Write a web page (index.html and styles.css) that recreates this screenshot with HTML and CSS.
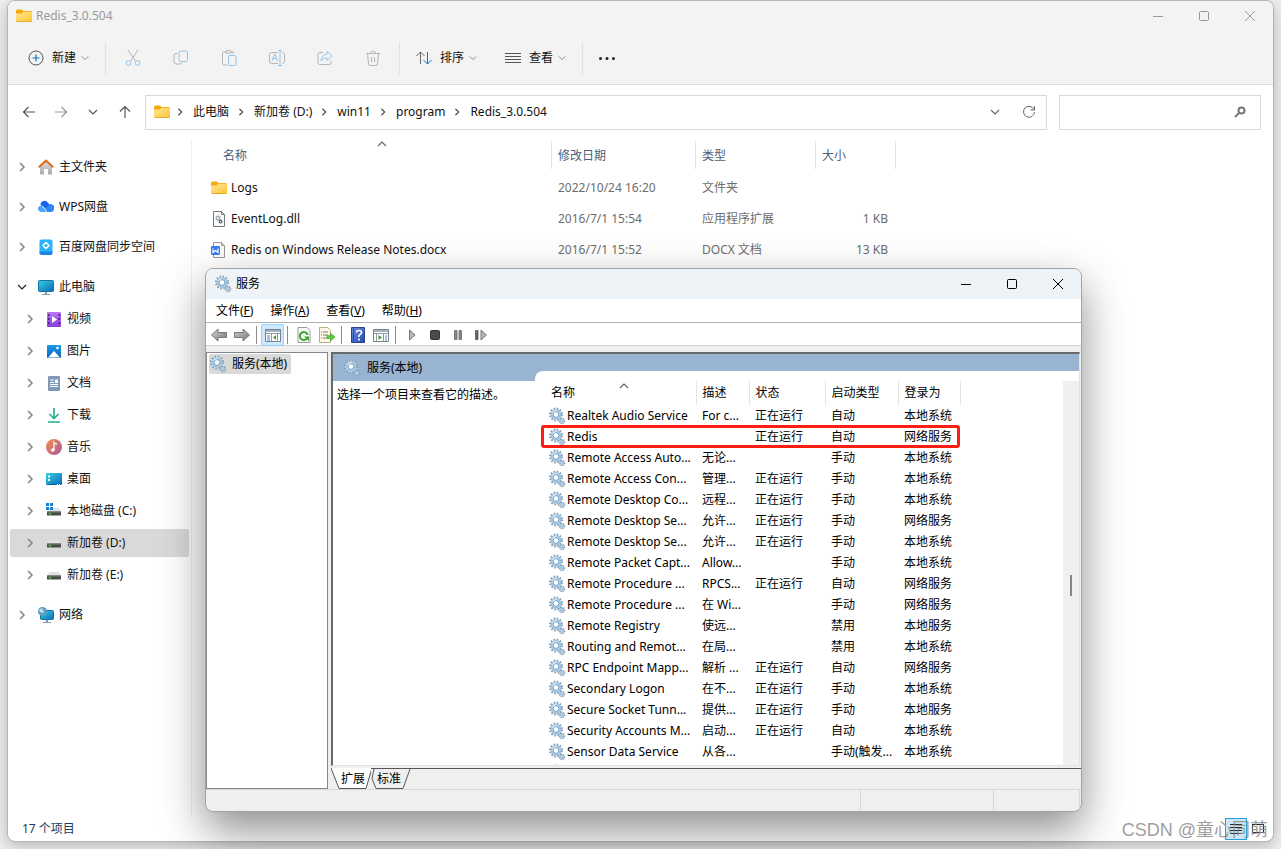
FILE: index.html
```html
<!DOCTYPE html>
<html lang="zh-CN">
  <head>
    <meta charset="utf-8">
    <title>Redis_3.0.504</title>
    <link rel="stylesheet" href="styles.css">
  </head>
  <body>
    <svg class="symbols" width="0" height="0" aria-hidden="true">
      <defs>
        <linearGradient id="yellow" x1="0" y1="0" x2="1" y2="1"><stop offset="0" stop-color="#ffe694"/><stop offset="1" stop-color="#fcc536"/></linearGradient>
        <linearGradient id="screen" x1="0" y1="0" x2="1" y2="1"><stop offset="0" stop-color="#35d3e0"/><stop offset="1" stop-color="#0c67bb"/></linearGradient>
        <linearGradient id="blue" x1="0" y1="0" x2="0" y2="1"><stop offset="0" stop-color="#1b9be8"/><stop offset="1" stop-color="#0c62bd"/></linearGradient>
        <linearGradient id="wall" x1="0" y1="0" x2="0" y2="1"><stop offset="0" stop-color="#e2e2e2"/><stop offset="1" stop-color="#a8a8a8"/></linearGradient>
        <linearGradient id="purple" x1="0" y1="0" x2="0" y2="1"><stop offset="0" stop-color="#b679f2"/><stop offset="1" stop-color="#8a3ddb"/></linearGradient>
        <linearGradient id="music" x1="0" y1="0" x2="1" y2="1"><stop offset="0" stop-color="#f59149"/><stop offset="1" stop-color="#a8559f"/></linearGradient>
        <linearGradient id="arrow" x1="0" y1="0" x2="1" y2="1"><stop offset="0" stop-color="#d2d2d2"/><stop offset="1" stop-color="#777"/></linearGradient>
        <linearGradient id="help" x1="0" y1="0" x2="1" y2="1"><stop offset="0" stop-color="#6d92e0"/><stop offset="1" stop-color="#2347b0"/></linearGradient>
      </defs>
      <symbol id="folder" viewBox="0 0 16 16">
        <path d="M0 3a1.500 1.500 0 0 1 1.500-1.500h4.500l1.500 1.500h7a1.500 1.500 0 0 1 1.500 1.500v8H0z" fill="#f5a90b"/>
        <path d="M0 5.500h5.500l1.800-1.800h7.700a1 1 0 0 1 1 1v8.300a1 1 0 0 1-1 1H1a1 1 0 0 1-1-1z" fill="url(#yellow)"/>
        <path d="M.2 13.200q.3.800 1 .8h13.600q.7 0 1-.8z" fill="#e0a11c"/>
      </symbol>
      <symbol id="down" viewBox="0 0 10 10"><path d="M1 3l4 4 4-4" fill="none" stroke="currentColor" stroke-width="1.200"/></symbol>
      <symbol id="right" viewBox="0 0 10 10"><path d="M3 1l4 4-4 4" fill="none" stroke="currentColor" stroke-width="1.600"/></symbol>
      <symbol id="gear" viewBox="0 0 18 18">
        <circle cx="8" cy="7.500" r="6" fill="#d3e4f0" stroke="#7f9fba" stroke-width="2" stroke-dasharray="1.500 1.640"/>
        <circle cx="8" cy="7.500" r="5" fill="#b9d5ea"/>
        <circle cx="8" cy="7.500" r="4.500" fill="none" stroke="#8fb2d0" stroke-width=".8"/>
        <circle cx="8" cy="7.500" r="2.900" fill="#fff" stroke="#6e9cc4" stroke-width="1"/>
        <path d="M4.500 6a4 4 0 0 1 4-2.500" fill="none" stroke="#eef6fc"/>
        <circle cx="14" cy="14" r="2.400" fill="#c9deed" stroke="#7d9db8" stroke-width="1.800" stroke-dasharray="1 .88"/>
        <circle cx="14" cy="14" r="1" fill="#fff" stroke="#8fb3cd" stroke-width=".8"/>
      </symbol>
      <symbol id="disk" viewBox="0 0 16 16">
        <path d="M3.500 5h9l2.500 4H1z" fill="#dfe0e2"/>
        <path d="M1 8.500h14v4H1z" fill="#4a4a4a"/><path d="M1 8.500h14v1H1z" fill="#7b7b7b"/>
        <path d="M3 10h2v1.500H3z" fill="#35e23a"/>
      </symbol>
      <symbol id="monitor" viewBox="0 0 16 16">
        <rect x=".5" y="1.500" width="15" height="11" rx="1" fill="url(#screen)" stroke="#17729c"/>
        <path d="M7 13h2v2H7zM4 15h8v1H4z" fill="#8b98a2"/>
      </symbol>
    </svg>

    <main class="explorer">
      <header class="titlebar">
        <svg class="icon"><use href="#folder"/></svg>
        <h1>Redis_3.0.504</h1>
        <div class="window-buttons">
          <button aria-label="最小化"><svg viewBox="0 0 12 12"><path d="M1 6.500h10"/></svg></button>
          <button aria-label="最大化"><svg viewBox="0 0 12 12"><rect x="1.500" y="1.500" width="9" height="9" rx="1"/></svg></button>
          <button aria-label="关闭"><svg viewBox="0 0 12 12"><path d="M1 1l10 10M11 1L1 11"/></svg></button>
        </div>
      </header>

      <div class="commands">
        <button class="command">
          <svg class="icon" viewBox="0 0 16 16" fill="none"><circle cx="8" cy="8" r="7" stroke="#555"/><path d="M8 4.500v7M4.500 8h7" stroke="#0a78cc" stroke-width="1.200"/></svg>
          新建<svg class="small"><use href="#down"/></svg>
        </button>
        <span class="divider"></span>
        <button class="tool" aria-label="剪切"><svg viewBox="0 0 16 16"><path d="M3 0l7.500 11M13 0L5.500 11" stroke="#b5b5b5"/><circle cx="3.500" cy="13" r="2.300"/><circle cx="12.500" cy="13" r="2.300"/></svg></button>
        <button class="tool" aria-label="复制"><svg viewBox="0 0 16 16"><path d="M4.500 3.500H3a2 2 0 0 0-2 2V12a2 2 0 0 0 2 2h4a2 2 0 0 0 2-1.500" stroke="#b5b5b5"/><rect x="6" y="1" width="8.500" height="10.500" rx="2"/></svg></button>
        <button class="tool" aria-label="粘贴"><svg viewBox="0 0 16 16"><path d="M6 15H3a1.500 1.500 0 0 1-1.500-1.500v-10A1.500 1.500 0 0 1 3 2h2m5 0h2.500v2M5 .8h5v2.400H5z" stroke="#b5b5b5"/><rect x="7.500" y="5.500" width="7.500" height="10" rx="1.500"/></svg></button>
        <button class="tool" aria-label="重命名"><svg viewBox="0 0 16 16"><path d="M9 2.500H2.500a2 2 0 0 0-2 2v7a2 2 0 0 0 2 2H9m4-11h.5a2 2 0 0 1 2 2v7a2 2 0 0 1-2 2H13" stroke="#b5b5b5"/><path d="M3 11l2.500-7h.5l2.500 7M4 8.500h3.500M11 .5v15M9 .5h4m-4 15h4"/></svg></button>
        <button class="tool" aria-label="共享"><svg viewBox="0 0 16 16"><path d="M6 2.500H3a2 2 0 0 0-2 2v8a2 2 0 0 0 2 2h9a2 2 0 0 0 2-2V11" stroke="#b5b5b5"/><path d="M10 1.500L15 6l-5 4.500V8Q6 8 4 11q.5-6 6-7z"/></svg></button>
        <button class="tool" aria-label="删除"><svg viewBox="0 0 16 16"><path d="M1 3.500h14M2.500 3.500l1 10.500a1.500 1.500 0 0 0 1.500 1.500h6a1.500 1.500 0 0 0 1.500-1.500l1-10.500M5.500 3.500a2.500 2.500 0 0 1 5 0M6.500 7v5M9.500 7v5" stroke="#b5b5b5"/></svg></button>
        <span class="divider"></span>
        <button class="command">
          <svg class="icon" viewBox="0 0 16 16" fill="none"><path d="M4.500 14V2M.5 6l4-4 4 4" stroke="#666"/><path d="M11.500 2v12M7.500 10l4 4 4-4" stroke="#0a78cc"/></svg>
          排序<svg class="small"><use href="#down"/></svg>
        </button>
        <button class="command">
          <svg class="icon" viewBox="0 0 16 16" stroke="#555"><path d="M0 3.500h16M0 6.500h16M0 9.500h16M0 12.500h16"/></svg>
          查看<svg class="small"><use href="#down"/></svg>
        </button>
        <span class="divider"></span>
        <button class="more" aria-label="更多"><svg class="icon" viewBox="0 0 16 16" fill="#222"><circle cx="1.500" cy="8.500" r="1.500"/><circle cx="8" cy="8.500" r="1.500"/><circle cx="14.500" cy="8.500" r="1.500"/></svg></button>
      </div>

      <div class="location">
        <div class="history">
          <button aria-label="返回"><svg viewBox="0 0 14 14"><path d="M13 7H1.500M6.500 2l-5 5 5 5"/></svg></button>
          <button class="faded" aria-label="前进"><svg viewBox="0 0 14 14"><path d="M1 7h11.500M7.500 2l5 5-5 5"/></svg></button>
          <button aria-label="最近"><svg viewBox="0 0 14 14"><path d="M3 5l4 4 4-4"/></svg></button>
          <button aria-label="向上"><svg viewBox="0 0 14 14"><path d="M7 13V1.500M2 6.500l5-5 5 5"/></svg></button>
        </div>
        <div class="address">
          <svg class="icon"><use href="#folder"/></svg>
          <svg class="crumb"><use href="#right"/></svg><a href="#">此电脑</a>
          <svg class="crumb"><use href="#right"/></svg><a href="#">新加卷 (D:)</a>
          <svg class="crumb"><use href="#right"/></svg><a href="#">win11</a>
          <svg class="crumb"><use href="#right"/></svg><a href="#">program</a>
          <svg class="crumb"><use href="#right"/></svg><a href="#">Redis_3.0.504</a>
          <button class="expand" aria-label="展开"><svg class="small"><use href="#down"/></svg></button>
          <button aria-label="刷新"><svg class="icon" viewBox="0 0 16 16" fill="none" stroke="#666"><path d="M13 5.500A5.500 5.500 0 1 0 13.500 8M13.500 2v4h-4"/></svg></button>
        </div>
        <label class="search">
          <input type="text" aria-label="搜索">
          <svg viewBox="0 0 12 12"><circle cx="7.500" cy="4.500" r="3"/><path d="M5.500 6.500L1 11"/></svg>
        </label>
      </div>

      <div class="browse">
        <nav class="tree">
          <a href="#"><svg class="small"><use href="#right"/></svg><svg class="icon" viewBox="0 0 16 16"><path d="M2 7l6-5 6 5v7.500a1 1 0 0 1-1 1h-3V10H6v5.500H3a1 1 0 0 1-1-1z" fill="url(#wall)"/><path d="M.8 8.300L8 1.700l7.200 6.600" fill="none" stroke="#e06c1c" stroke-width="2"/></svg>主文件夹</a>
          <a class="group" href="#"><svg class="small"><use href="#right"/></svg><svg class="icon" viewBox="0 0 16 16"><path d="M2.500 5.500a4 4 0 0 1 7.500-1.500q2 1 2 3l-3 5z" fill="#1a62e8"/><path d="M8 13L6 10l3.500-2.500a3.200 3.200 0 0 1 6.500 2 3.500 3.500 0 0 1-3.500 3.500z" fill="#2f86f8"/><path d="M0 9a3.500 3.500 0 0 1 6-1.500L9.500 13H3.500A3.500 3.500 0 0 1 0 9z" fill="#4ba6ff"/><path d="M4 7.500q3 1 4.500 5.500" stroke="#fff" fill="none" stroke-width=".8"/></svg>WPS网盘</a>
          <a class="group" href="#"><svg class="small"><use href="#right"/></svg><svg class="icon" viewBox="0 0 16 16"><rect x="1.500" y=".5" width="13" height="15" rx="2" fill="#2cb1fc"/><path d="M1.500 12.500h13V14a2 2 0 0 1-2 2h-9a2 2 0 0 1-2-2z" fill="#1689e8"/><path d="M8 3.500L5 6.500l3 3 3-3z" fill="none" stroke="#fff" stroke-width="1.600" stroke-linejoin="round"/></svg>百度网盘同步空间</a>
          <a class="group open" href="#"><svg class="small"><use href="#down"/></svg><svg class="icon"><use href="#monitor"/></svg>此电脑</a>
          <a class="child" href="#"><svg class="small"><use href="#right"/></svg><svg class="icon" viewBox="0 0 16 16"><rect x="1" y="1" width="14" height="15" rx="1" fill="url(#purple)"/><path d="M2 3h1.500v2H2zm0 4h1.500v2H2zm0 4h1.500v2H2zM12.500 3H14v2h-1.500zm0 4H14v2h-1.500zm0 4H14v2h-1.500z" fill="#4b1d7c"/><path d="M6 5l5 3.500L6 12z" fill="#fff"/></svg>视频</a>
          <a class="child" href="#"><svg class="small"><use href="#right"/></svg><svg class="icon" viewBox="0 0 16 16"><rect x="1" y="2" width="14" height="13" rx="1" fill="url(#blue)"/><path d="M2 14.500L8 8l6 6.500z" fill="#fff"/><circle cx="11.500" cy="5" r="1.300" fill="#fff"/></svg>图片</a>
          <a class="child" href="#"><svg class="small"><use href="#right"/></svg><svg class="icon" viewBox="0 0 16 16"><rect x="2" y="1" width="12" height="15" rx="1" fill="#7f99b6"/><path d="M4 5h4M4 7.500h4M4 9.500h8M4 11.500h8" stroke="#fff"/><path d="M9 4.500h3V8H9z" fill="#fff"/></svg>文档</a>
          <a class="child" href="#"><svg class="small"><use href="#right"/></svg><svg class="icon" viewBox="0 0 16 16"><path d="M8 1v10.500M3.500 7L8 11.500 12.500 7M2 15h12" fill="none" stroke="#1fae8e" stroke-width="1.600"/></svg>下载</a>
          <a class="child" href="#"><svg class="small"><use href="#right"/></svg><svg class="icon" viewBox="0 0 16 16"><circle cx="8" cy="8" r="8" fill="url(#music)"/><circle cx="6.800" cy="11" r="1.800" fill="#fff"/><path d="M8 11V3.500q1 1.500 3 1.500" fill="none" stroke="#fff" stroke-width="1.300"/></svg>音乐</a>
          <a class="child" href="#"><svg class="small"><use href="#right"/></svg><svg class="icon" viewBox="0 0 16 16"><rect y="2" width="16" height="12" rx="1" fill="url(#screen)"/><path d="M2 4.500h2v2H2zm0 3.500h2v2H2z" fill="#fff"/><path d="M1 13.500h9" stroke="#0a5c9c"/><path d="M11 13.500h1m1 0h1" stroke="#fff"/></svg>桌面</a>
          <a class="child" href="#"><svg class="small"><use href="#right"/></svg><svg class="icon" viewBox="0 0 16 16"><use href="#disk"/><path d="M0 0h3v3H0zm4 0h3v3H4zM0 4h3v3H0zm4 0h3v3H4z" fill="#0f7fd8"/></svg>本地磁盘 (C:)</a>
          <a class="child selected" href="#"><svg class="small"><use href="#right"/></svg><svg class="icon"><use href="#disk"/></svg>新加卷 (D:)</a>
          <a class="child" href="#"><svg class="small"><use href="#right"/></svg><svg class="icon"><use href="#disk"/></svg>新加卷 (E:)</a>
          <a class="group" href="#"><svg class="small"><use href="#right"/></svg><svg class="icon" viewBox="0 0 16 16"><rect x="2.500" y="3.500" width="13" height="9" rx="1" fill="url(#screen)" stroke="#17729c"/><path d="M8 13h2v2H8zM5 15h8v1H5z" fill="#8b98a2"/><circle cx="4.500" cy="4.500" r="4.500" fill="#5d9dc2"/><path d="M1 3q2-2 4-2l-1 2 2 1-1 2-3-1z" fill="#c3e2ee"/></svg>网络</a>
        </nav>

        <section class="files">
          <table>
            <colgroup><col class="f-name"><col class="f-date"><col class="f-type"><col class="f-size"></colgroup>
            <thead>
              <tr><th>名称<svg class="sort"><use href="#down"/></svg></th><th>修改日期</th><th>类型</th><th>大小</th></tr>
            </thead>
            <tbody>
              <tr><td><div class="file"><svg class="icon"><use href="#folder"/></svg>Logs</div></td><td>2022/10/24 16:20</td><td>文件夹</td><td></td></tr>
              <tr><td><div class="file"><svg class="icon" viewBox="0 0 16 16"><path d="M2.500.5h8l3 3v12h-11z" fill="#fafafa" stroke="#777"/><path d="M10.500.5v3h3" fill="none" stroke="#777"/><circle cx="7" cy="7" r="1.800" fill="none" stroke="#a3adb8" stroke-width="1.500"/><circle cx="9.500" cy="10.500" r="1.300" fill="none" stroke="#59636e" stroke-width="1.300"/></svg>EventLog.dll</div></td><td>2016/7/1 15:54</td><td>应用程序扩展</td><td>1 KB</td></tr>
              <tr><td><div class="file"><svg class="icon" viewBox="0 0 16 16"><path d="M2.500.5h8l3 3v12h-11z" fill="#fafafa" stroke="#999"/><path d="M10.500.5v3h3" fill="none" stroke="#999"/><rect y="4" width="9" height="9" rx="1" fill="#3d7df0"/><path d="M2 6.500v4l2.500-2 2.500 2v-4" fill="none" stroke="#fff" stroke-width="1.200"/></svg>Redis on Windows Release Notes.docx</div></td><td>2016/7/1 15:52</td><td>DOCX 文档</td><td>13 KB</td></tr>
            </tbody>
          </table>
        </section>
      </div>

      <footer class="summary">
        <span>17 个项目</span>
        <button class="view active" aria-label="详细信息"><svg viewBox="0 0 14 14"><path d="M1 2.500h12M1 5.500h12M1 8.500h12M1 11.500h12"/></svg></button>
        <button class="view" aria-label="大图标"><svg viewBox="0 0 14 14"><rect x="1.500" y="2.500" width="11" height="8"/></svg></button>
      </footer>
    </main>

    <section class="services">
      <header class="titlebar">
        <svg class="gear"><use href="#gear"/></svg>
        <h2>服务</h2>
        <div class="window-buttons">
          <button aria-label="最小化"><svg viewBox="0 0 12 12"><path d="M1 6.500h10"/></svg></button>
          <button aria-label="最大化"><svg viewBox="0 0 12 12"><rect x="1.500" y="1.500" width="9" height="9" rx="1"/></svg></button>
          <button aria-label="关闭"><svg viewBox="0 0 12 12"><path d="M1 1l10 10M11 1L1 11"/></svg></button>
        </div>
      </header>

      <div class="menu">
        <button>文件(<u>F</u>)</button>
        <button>操作(<u>A</u>)</button>
        <button>查看(<u>V</u>)</button>
        <button>帮助(<u>H</u>)</button>
      </div>

      <div class="toolbar">
        <button aria-label="后退"><svg viewBox="0 0 16 16"><path d="M.5 8L7 2v3.500h8.500v5H7V14z" fill="url(#arrow)" stroke="#777"/></svg></button>
        <button aria-label="前进"><svg viewBox="0 0 16 16"><path d="M15.500 8L9 2v3.500H.5v5H9V14z" fill="url(#arrow)" stroke="#777"/></svg></button>
        <i></i>
        <button class="pressed" aria-label="控制台树"><svg viewBox="0 0 16 16"><path d="M.5 2.500h15v12H.5z" fill="#fff" stroke="#76828f"/><path d="M1 3h14v2H1z" fill="#a5b2c0"/><path d="M1 6.500h14M6.500 7v7.500M12.500 7v7.500" stroke="#8d99a6"/><path d="M2 9h3M2 11h3M2 13h3" stroke="#4a86c5"/><path d="M11 8v5l-3-2.500z" fill="#35a526"/></svg></button>
        <i></i>
        <button aria-label="刷新"><svg viewBox="0 0 16 16"><path d="M2 .5h9l3 3v12H2z" fill="#fafafa" stroke="#999"/><path d="M11 11.500a4 4 0 1 1 .7-3.500" fill="none" stroke="#39a431" stroke-width="2"/><path d="M8 9.500h5V14z" fill="#39a431"/></svg></button>
        <button aria-label="导出列表"><svg viewBox="0 0 16 16"><path d="M.5.500h8l3 3v12H.500z" fill="#fffbe4" stroke="#b8ad87"/><path d="M2 5h1m1 0h5M2 8h1m1 0h5M2 11h1m1 0h5" stroke="#777"/><path d="M8 8.500h3.500V6L16 10l-4.500 4v-2.500H8z" fill="#5bc839" stroke="#3b9e21" stroke-width=".5"/></svg></button>
        <i></i>
        <button aria-label="帮助"><svg viewBox="0 0 16 16"><path d="M1.500.5h13v15h-13z" fill="url(#help)" stroke="#29438e"/><path d="M3.500 1v14" stroke="#2a49a4"/><path d="M6.500 5.500q0-2 2.500-2t2.500 2q0 1.300-1.500 2T9 10M9 11.500v2" fill="none" stroke="#fff" stroke-width="1.700"/></svg></button>
        <button aria-label="操作窗格"><svg viewBox="0 0 16 16"><path d="M.5 2.500h15v12H.5z" fill="#fff" stroke="#76828f"/><path d="M1 3h14v2H1z" fill="#a5b2c0"/><path d="M1 6.500h14M3.500 7v7.500M10.500 7v7.500" stroke="#8d99a6"/><path d="M12 9h2M12 11h2M12 13h2" stroke="#4a86c5"/><path d="M5.500 8v5l3.500-2.500z" fill="#35a526"/></svg></button>
        <i></i>
        <button aria-label="启动"><svg viewBox="0 0 16 16"><path d="M5.500 3v10L11 8z" fill="#b5b5b5" stroke="#777"/></svg></button>
        <button aria-label="停止"><svg viewBox="0 0 16 16"><rect x="3.500" y="3.500" width="9" height="9" rx="1" fill="#4b4b4b" stroke="#333"/></svg></button>
        <button aria-label="暂停"><svg viewBox="0 0 16 16"><path d="M4.500 3.500H7v9H4.500zM9 3.500h2.500v9H9z" fill="#888" stroke="#666" stroke-width=".8"/></svg></button>
        <button aria-label="重新启动"><svg viewBox="0 0 16 16"><path d="M2.500 3.500H5v9H2.500z" fill="#666" stroke="#555" stroke-width=".8"/><path d="M8 3v10l5.500-5z" fill="#b5b5b5" stroke="#777"/></svg></button>
      </div>

      <div class="console">
        <div class="console-tree">
          <a href="#"><svg class="gear"><use href="#gear"/></svg>服务(本地)</a>
        </div>
        <div class="detail">
          <div class="pane">
            <div class="extended">
              <h3><svg class="gear"><use href="#gear"/></svg>服务(本地)</h3>
              <p>选择一个项目来查看它的描述。</p>
            </div>
            <div class="list">
              <table>
                <colgroup><col class="s-name"><col class="s-desc"><col class="s-state"><col class="s-start"><col class="s-user"></colgroup>
                <thead>
                  <tr><th>名称<svg class="sort"><use href="#down"/></svg></th><th>描述</th><th>状态</th><th>启动类型</th><th>登录为</th></tr>
                </thead>
                <tbody>
                  <tr><td><svg class="gear"><use href="#gear"/></svg>Realtek Audio Service</td><td>For c...</td><td>正在运行</td><td>自动</td><td>本地系统</td></tr>
                  <tr class="marked"><td><svg class="gear"><use href="#gear"/></svg>Redis</td><td></td><td>正在运行</td><td>自动</td><td>网络服务</td></tr>
                  <tr><td><svg class="gear"><use href="#gear"/></svg>Remote Access Auto...</td><td>无论...</td><td></td><td>手动</td><td>本地系统</td></tr>
                  <tr><td><svg class="gear"><use href="#gear"/></svg>Remote Access Con...</td><td>管理...</td><td>正在运行</td><td>手动</td><td>本地系统</td></tr>
                  <tr><td><svg class="gear"><use href="#gear"/></svg>Remote Desktop Co...</td><td>远程...</td><td>正在运行</td><td>手动</td><td>本地系统</td></tr>
                  <tr><td><svg class="gear"><use href="#gear"/></svg>Remote Desktop Se...</td><td>允许...</td><td>正在运行</td><td>手动</td><td>网络服务</td></tr>
                  <tr><td><svg class="gear"><use href="#gear"/></svg>Remote Desktop Se...</td><td>允许...</td><td>正在运行</td><td>手动</td><td>本地系统</td></tr>
                  <tr><td><svg class="gear"><use href="#gear"/></svg>Remote Packet Capt...</td><td>Allow...</td><td></td><td>手动</td><td>本地系统</td></tr>
                  <tr><td><svg class="gear"><use href="#gear"/></svg>Remote Procedure ...</td><td>RPCS...</td><td>正在运行</td><td>自动</td><td>网络服务</td></tr>
                  <tr><td><svg class="gear"><use href="#gear"/></svg>Remote Procedure ...</td><td>在 Wi...</td><td></td><td>手动</td><td>网络服务</td></tr>
                  <tr><td><svg class="gear"><use href="#gear"/></svg>Remote Registry</td><td>使远...</td><td></td><td>禁用</td><td>本地服务</td></tr>
                  <tr><td><svg class="gear"><use href="#gear"/></svg>Routing and Remot...</td><td>在局...</td><td></td><td>禁用</td><td>本地系统</td></tr>
                  <tr><td><svg class="gear"><use href="#gear"/></svg>RPC Endpoint Mapp...</td><td>解析 ...</td><td>正在运行</td><td>自动</td><td>网络服务</td></tr>
                  <tr><td><svg class="gear"><use href="#gear"/></svg>Secondary Logon</td><td>在不...</td><td>正在运行</td><td>手动</td><td>本地系统</td></tr>
                  <tr><td><svg class="gear"><use href="#gear"/></svg>Secure Socket Tunn...</td><td>提供...</td><td>正在运行</td><td>手动</td><td>本地服务</td></tr>
                  <tr><td><svg class="gear"><use href="#gear"/></svg>Security Accounts M...</td><td>启动...</td><td>正在运行</td><td>自动</td><td>本地系统</td></tr>
                  <tr><td><svg class="gear"><use href="#gear"/></svg>Sensor Data Service</td><td>从各...</td><td></td><td>手动(触发...</td><td>本地系统</td></tr>
                  <tr><td><svg class="gear"><use href="#gear"/></svg></td><td></td><td></td><td></td><td></td></tr>
                </tbody>
              </table>
              <div class="scrollbar"><span></span></div>
            </div>
          </div>
          <div class="tabs">
            <button class="tab current"><svg viewBox="0 0 40 21" preserveAspectRatio="none"><path d="M0 0l8 20.500h27L41 0" fill="#fff" stroke="#555"/></svg><span>扩展</span></button>
            <button class="tab"><svg viewBox="0 0 40 21" preserveAspectRatio="none"><path d="M3 0L1 10l4 10.500h27L39 0" fill="#efefef" stroke="#555"/></svg><span>标准</span></button>
          </div>
        </div>
      </div>
      <footer class="status"><span></span><span></span><span></span></footer>
    </section>

    <p class="credit">CSDN @童心同萌</p>
  </body>
</html>
```
FILE: styles.css
```css
*,
*:after,
*:before {
  box-sizing: border-box;
  margin: 0;
  padding: 0;
}

body {
  height: 100vh;
  display: flex;
  padding: 0 7px 7px;
  position: relative;
  overflow: hidden;
  background: #f0f0f0;
  color: #111;
  font-family: "Noto Sans", "Noto Sans CJK SC", sans-serif;
  font-size: 12px;
  line-height: 16px;
}

button {
  border: 0;
  background: none;
  color: inherit;
  font: inherit;
  display: flex;
  align-items: center;
  justify-content: center;
}

a {
  color: inherit;
  text-decoration: none;
}

svg {
  flex: none;
}

table {
  table-layout: fixed;
  border-collapse: collapse;
}

th {
  font-weight: normal;
  text-align: left;
}

h1,
h2,
h3 {
  font-size: 12px;
  font-weight: normal;
}

.symbols {
  position: absolute;
}

.icon {
  width: 16px;
  height: 16px;
}

.small {
  width: 10px;
  height: 10px;
}

.gear {
  width: 18px;
  height: 18px;
}

/* explorer window */

.explorer {
  flex: 1;
  min-width: 0;
  display: flex;
  flex-direction: column;
  border: 1px solid #b5b5b5;
  border-radius: 8px;
  overflow: hidden;
  background: #fff;
  box-shadow: 0 4px 16px rgba(0, 0, 0, 0.25);
}

.titlebar {
  display: flex;
  align-items: center;
  height: 29px;
  padding-left: 8px;
  gap: 4px;
  background: #f3f3f3;
  color: #999;
}

.window-buttons {
  display: flex;
  margin-left: auto;
}

.window-buttons button {
  width: 46px;
  height: 29px;
}

.window-buttons svg {
  width: 12px;
  height: 12px;
  fill: none;
  stroke: currentColor;
}

.commands {
  display: flex;
  align-items: center;
  height: 55px;
  padding: 2px 0 0 12px;
  background: #f3f3f3;
  border-bottom: 1px solid #dcdcdc;
}

.command {
  height: 32px;
  padding: 0 8px;
  gap: 8px;
}

.command .small {
  width: 8px;
  height: 8px;
  margin-left: -3px;
  color: #888;
}

.divider {
  width: 1px;
  height: 32px;
  margin: 0 8px;
  background: #e0e0e0;
}

.divider + .tool {
  margin-left: -5px;
}

.tool {
  width: 48px;
  height: 32px;
}

.tool + .divider {
  margin-left: 2px;
}

.tool svg {
  width: 16px;
  height: 16px;
  fill: none;
  stroke: #93c4ea;
}

.command + .command {
  margin-left: 12px;
}

.more {
  width: 32px;
  height: 32px;
}

.location {
  display: flex;
  align-items: center;
  height: 54px;
  padding: 0 12px 0 5px;
}

.history {
  display: flex;
  width: 132px;
}

.history button {
  width: 32px;
  height: 32px;
}

.history svg {
  width: 14px;
  height: 14px;
  fill: none;
  stroke: #555;
  stroke-width: 1.2;
}

.history .faded {
  opacity: 0.6;
}

.address {
  flex: 1;
  display: flex;
  align-items: center;
  height: 35px;
  padding: 0 9px 0 8px;
  border: 1px solid #d9d9d9;
}

.crumb {
  width: 8px;
  height: 8px;
  margin: 0 9px 0 8px;
  color: #555;
}

.icon + .crumb {
  margin-left: 6px;
}

.expand {
  margin-left: auto;
  margin-right: 21px;
  color: #666;
}

.search {
  display: flex;
  align-items: center;
  width: 202px;
  height: 35px;
  margin-left: 12px;
  padding-right: 14px;
  border: 1px solid #d9d9d9;
}

.search input {
  flex: 1;
  min-width: 0;
  height: 31px;
  border: 0;
  outline: 0;
  font: inherit;
}

.search svg {
  width: 12px;
  height: 12px;
  fill: none;
  stroke: #777;
  stroke-width: 2;
}

.browse {
  flex: 1;
  display: flex;
  min-height: 0;
}

.tree {
  width: 184px;
  padding: 14px 2px 0;
  border-right: 1px solid #f0f0f0;
}

.tree a {
  display: flex;
  align-items: center;
  height: 28px;
  margin-bottom: 4px;
  padding-left: 7px;
  border-radius: 2px;
  white-space: nowrap;
}

.tree .group {
  margin-top: 12px;
}

.tree .child {
  padding-left: 15px;
}

.tree .selected {
  background: #d9d9d9;
}

.tree .small {
  margin-right: 11px;
  color: #888;
}

.tree .open .small {
  color: #222;
}

.tree .icon {
  margin-right: 5px;
}

.files {
  flex: 1;
  padding-left: 17px;
}

.f-name {
  width: 343px;
}

.f-date {
  width: 144px;
}

.f-type {
  width: 120px;
}

.f-size {
  width: 80px;
}

.files th {
  position: relative;
  height: 33px;
  padding: 0 6px;
  background: linear-gradient(#e3e3e3, #e3e3e3) right 2px / 1px 28px no-repeat;
  color: #4c607a;
}

.files th:first-child {
  padding-left: 14px;
}

.sort {
  position: absolute;
  top: 0;
  left: 49%;
  width: 10px;
  height: 10px;
  color: #666;
  transform: rotate(180deg);
}

.files td {
  height: 31px;
  padding: 0 6px;
  color: #6d6d6d;
}

.files td:first-child {
  padding-left: 2px;
  color: #111;
}

.files td:last-child {
  padding-right: 8px;
  text-align: right;
}

.file {
  display: flex;
  align-items: center;
  gap: 4px;
}

.summary {
  display: flex;
  align-items: center;
  height: 25px;
  padding: 0 4px 0 14px;
  color: #1e395b;
}

.summary span {
  flex: 1;
}

.view {
  width: 22px;
  height: 22px;
  border: 1px solid transparent;
}

.view svg {
  width: 14px;
  height: 14px;
  fill: none;
  stroke: #222;
}

.view.active {
  background: #cce8f7;
  border-color: #26a0da;
}

/* services window, floating over the explorer */

.services {
  position: absolute;
  top: 268px;
  left: 205px;
  right: 199px;
  bottom: 37px;
  display: flex;
  flex-direction: column;
  border: 1px solid #a3a3a3;
  border-radius: 8px;
  overflow: hidden;
  background: #efefef;
  color: #000;
  box-shadow: 0 18px 44px rgba(0, 0, 0, 0.45);
}

.services .titlebar {
  height: 30px;
  background: #eef3f8;
  color: #000;
}

.menu {
  display: flex;
  gap: 1px;
  height: 24px;
  padding-left: 2px;
  background: #fff;
  border-bottom: 1px solid #b0b0b0;
}

.menu button {
  padding: 0 8px;
}

.toolbar {
  display: flex;
  align-items: center;
  height: 23px;
  padding: 1px 0 0 1px;
  background: #fff;
  border-bottom: 1px solid #d0d0d0;
}

.toolbar button {
  width: 23px;
  height: 22px;
}

.toolbar svg {
  width: 16px;
  height: 16px;
}

.toolbar .pressed {
  background: #cce8ff;
  border: 1px solid #99d1ff;
  border-radius: 2px;
}

.toolbar i {
  width: 1px;
  height: 18px;
  margin: 0 4px 0 3px;
  background: #8c8c8c;
}

.console {
  flex: 1;
  display: flex;
  gap: 3px;
  min-height: 0;
  padding-top: 6px;
}

.console-tree {
  width: 122px;
  padding: 1px 2px;
  border: 1px solid #828790;
  background: #fff;
}

.console-tree a {
  display: inline-flex;
  align-items: center;
  height: 20px;
  padding-right: 4px;
  gap: 5px;
  border-radius: 2px;
  background: #d9d9d9;
}

.detail {
  flex: 1;
  display: flex;
  flex-direction: column;
  min-width: 0;
}

.pane {
  flex: 1;
  display: flex;
  min-height: 0;
  margin-right: 1px;
  border: 2px solid #696969;
  border-right: 1px solid #e3e3e3;
  border-bottom: 1px solid #e3e3e3;
  background: #99b4d1;
}

.extended {
  width: 202px;
  display: flex;
  flex-direction: column;
}

.extended h3 {
  display: flex;
  align-items: center;
  height: 27px;
  padding-left: 10px;
  gap: 6px;
}

.extended p {
  flex: 1;
  padding: 6px 4px;
  background: #fff;
  white-space: nowrap;
}

.list {
  flex: 1;
  display: flex;
  min-width: 0;
  margin-top: 17px;
  padding: 10px 0 0 10px;
  overflow: hidden;
  border-top-left-radius: 8px;
  background: #fff;
}

.list table {
  width: 415px;
  height: 0;
}

.s-name {
  width: 151px;
}

.s-desc {
  width: 53px;
}

.s-state {
  width: 76px;
}

.s-start {
  width: 73px;
}

.s-user {
  width: 62px;
}

.list th {
  position: relative;
  height: 24px;
  padding-left: 6px;
  border-right: 1px solid #e3e3e3;
}

.list td {
  height: 21px;
  padding: 1px 0 0 6px;
  line-height: 18px;
  white-space: nowrap;
}

.list td:first-child {
  padding-left: 3px;
}

.list td .gear {
  margin-right: 1px;
  vertical-align: top;
}

.marked {
  position: relative;
}

.marked td:first-child:after {
  content: "";
  position: absolute;
  inset: -1px 0 -1px -4px;
  border: 3px solid #fb1f12;
  border-radius: 3px;
}

.scrollbar {
  width: 16px;
  margin-left: auto;
  display: flex;
  align-items: center;
  justify-content: center;
  background: #f0f0f0;
}

.scrollbar span {
  width: 2px;
  height: 21px;
  margin-top: 24px;
  background: #858585;
}

.tabs {
  display: flex;
  height: 21px;
  margin-top: 2px;
  border-top: 1px solid #555;
}

.tab {
  position: relative;
  width: 40px;
  height: 20px;
  padding-right: 4px;
}

.tab svg {
  position: absolute;
  inset: 0;
  width: 40px;
  height: 100%;
}

.tab span {
  position: relative;
}

.tab.current {
  height: 21px;
  margin-top: -1px;
  padding: 0 0 0 4px;
}

.status {
  display: flex;
  justify-content: flex-end;
  height: 22px;
  border-top: 1px solid #d7d7d7;
}

.status span {
  width: 133px;
  border-left: 1px solid #d7d7d7;
}

.status span:nth-child(2) {
  width: 86px;
}

.status span:last-child {
  width: 2px;
}

.credit {
  position: absolute;
  right: 13px;
  bottom: 7px;
  color: #888;
  opacity: 0.8;
  font-family: "Liberation Sans", "Noto Sans CJK SC", sans-serif;
  font-size: 18px;
  line-height: 24px;
}
```
